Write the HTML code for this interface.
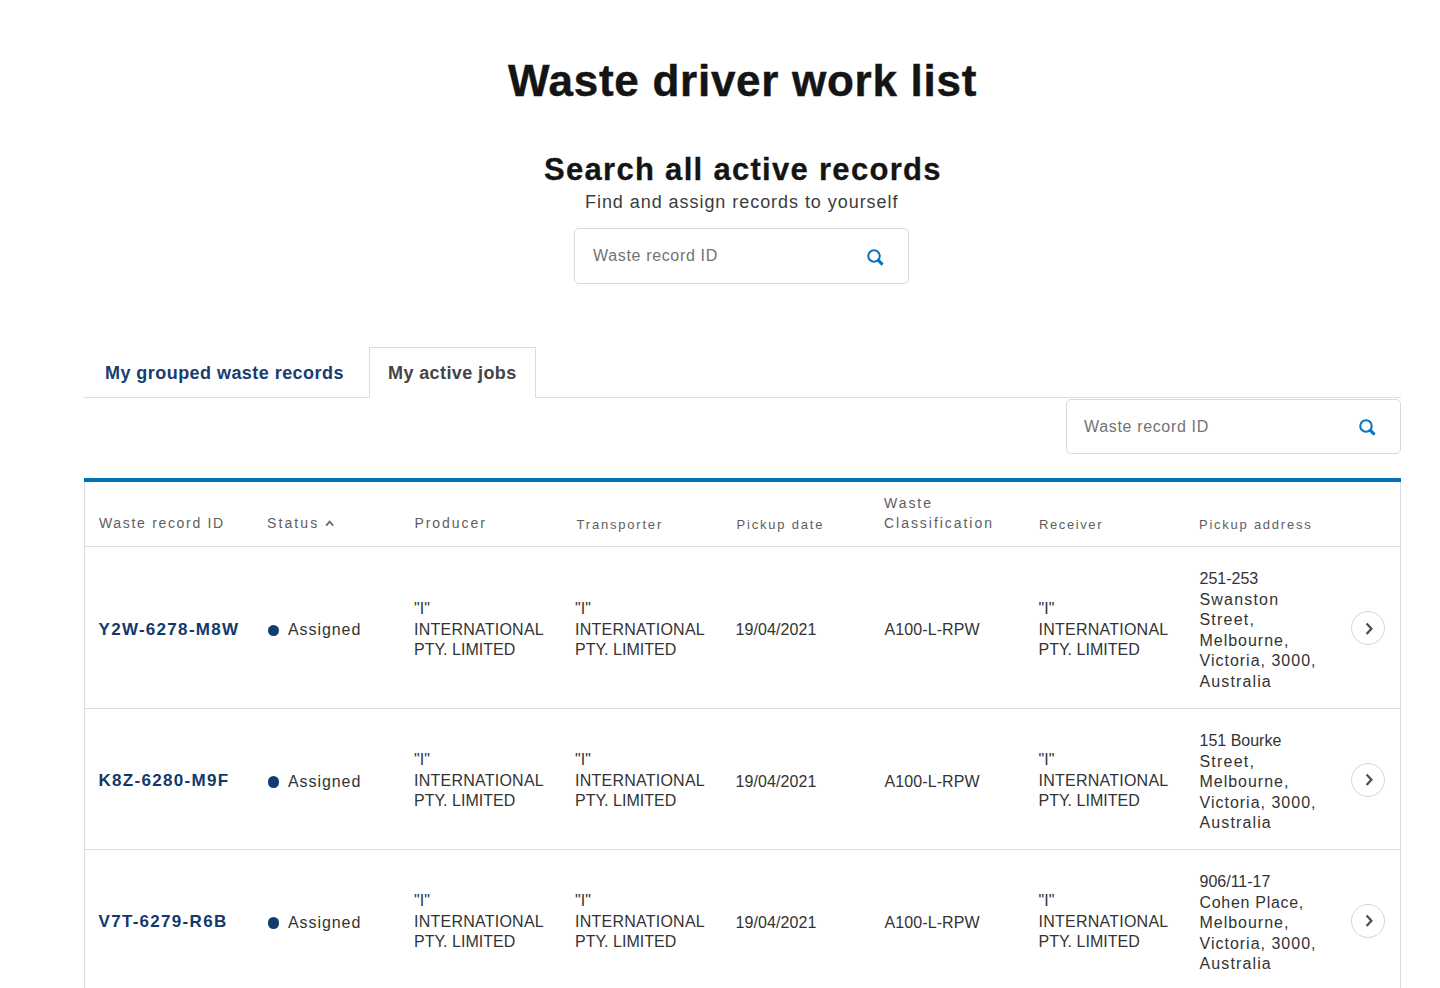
<!DOCTYPE html>
<html><head><meta charset="utf-8"><title>Waste driver work list</title>
<style>
html,body{margin:0;padding:0;background:#fff;}
body{width:1440px;height:988px;overflow:hidden;position:relative;font-family:"Liberation Sans", sans-serif;}
.box{position:absolute;box-sizing:border-box;}
</style></head><body>
<div style="position:absolute;left:508px;top:53.75px;font-size:44px;line-height:53px;font-weight:700;color:#141414;letter-spacing:0.72px;white-space:nowrap;-webkit-text-stroke:0.45px #141414;">Waste driver work list</div>
<div style="position:absolute;left:544px;top:151.36px;font-size:31px;line-height:37px;font-weight:700;color:#141414;letter-spacing:1.3px;white-space:nowrap;-webkit-text-stroke:0.3px #141414;">Search all active records</div>
<div style="position:absolute;left:585px;top:191.16px;font-size:18px;line-height:22px;font-weight:400;color:#3c3c3c;letter-spacing:0.95px;white-space:nowrap;">Find and assign records to yourself</div>
<div class="box" style="left:574px;top:228px;width:335px;height:56px;border:1px solid #d9d9d9;border-radius:5px"></div>
<div style="position:absolute;left:593px;top:245.76px;font-size:16px;line-height:19px;font-weight:400;color:#737373;letter-spacing:0.66px;white-space:nowrap;">Waste record ID</div>
<svg style="position:absolute;left:864.20px;top:246.20px" width="24" height="24" viewBox="0 0 24 24"><circle cx="10" cy="10" r="5.75" fill="none" stroke="#0a74bd" stroke-width="2.05"/><line x1="13.6" y1="13.6" x2="18.6" y2="18.6" stroke="#0a74bd" stroke-width="3.0" stroke-linecap="butt"/></svg>
<div class="box" style="left:84px;top:397px;width:1317px;height:1px;background:#dcdcdc"></div>
<div class="box" style="left:369px;top:347px;width:167px;height:51px;border:1px solid #dcdcdc;border-bottom:none;background:#fff"></div>
<div style="position:absolute;left:105px;top:361.76px;font-size:18px;line-height:22px;font-weight:700;color:#1a3c70;letter-spacing:0.45px;white-space:nowrap;">My grouped waste records</div>
<div style="position:absolute;left:388px;top:361.76px;font-size:18px;line-height:22px;font-weight:700;color:#444444;letter-spacing:0.4px;white-space:nowrap;">My active jobs</div>
<div class="box" style="left:1066px;top:399px;width:335px;height:55px;border:1px solid #d9d9d9;border-radius:5px"></div>
<div style="position:absolute;left:1084px;top:416.56px;font-size:16px;line-height:19px;font-weight:400;color:#737373;letter-spacing:0.66px;white-space:nowrap;">Waste record ID</div>
<svg style="position:absolute;left:1355.50px;top:416.20px" width="24" height="24" viewBox="0 0 24 24"><circle cx="10" cy="10" r="5.75" fill="none" stroke="#0a74bd" stroke-width="2.05"/><line x1="13.6" y1="13.6" x2="18.6" y2="18.6" stroke="#0a74bd" stroke-width="3.0" stroke-linecap="butt"/></svg>
<div class="box" style="left:84px;top:478px;width:1317px;height:4px;background:#0071b6"></div>
<div class="box" style="left:84px;top:482px;width:1px;height:520px;background:#d8dce3"></div>
<div class="box" style="left:1400px;top:482px;width:1px;height:520px;background:#d8dce3"></div>
<div class="box" style="left:84px;top:546px;width:1317px;height:1px;background:#d8dce3"></div>
<div class="box" style="left:84px;top:708px;width:1317px;height:1px;background:#d8dce3"></div>
<div class="box" style="left:84px;top:849px;width:1317px;height:1px;background:#d8dce3"></div>
<div style="position:absolute;left:99px;top:515.15px;font-size:14px;line-height:17px;font-weight:400;color:#5e5e5e;letter-spacing:1.68px;white-space:nowrap;">Waste record ID</div>
<div style="position:absolute;left:267px;top:515.15px;font-size:14px;line-height:17px;font-weight:400;color:#5e5e5e;letter-spacing:2.1px;white-space:nowrap;">Status</div>
<svg style="position:absolute;left:323px;top:518px" width="14" height="12" viewBox="0 0 14 12"><polyline points="3.2,7.6 6.6,3.6 10.2,7.6" fill="none" stroke="#6a6a6a" stroke-width="1.8"/></svg>
<div style="position:absolute;left:414.5px;top:515.15px;font-size:14px;line-height:17px;font-weight:400;color:#5e5e5e;letter-spacing:1.93px;white-space:nowrap;">Producer</div>
<div style="position:absolute;left:576.5px;top:516.70px;font-size:13px;line-height:16px;font-weight:400;color:#5e5e5e;letter-spacing:1.8px;white-space:nowrap;">Transporter</div>
<div style="position:absolute;left:736.5px;top:516.70px;font-size:13px;line-height:16px;font-weight:400;color:#5e5e5e;letter-spacing:1.8px;white-space:nowrap;">Pickup date</div>
<div style="position:absolute;left:884px;top:494.40px;font-size:14px;line-height:19.5px;font-weight:400;color:#5e5e5e;letter-spacing:1.96px;white-space:nowrap;">Waste<br>Classification</div>
<div style="position:absolute;left:1039px;top:517.30px;font-size:13px;line-height:16px;font-weight:400;color:#5e5e5e;letter-spacing:1.6px;white-space:nowrap;">Receiver</div>
<div style="position:absolute;left:1199px;top:516.80px;font-size:13px;line-height:16px;font-weight:400;color:#5e5e5e;letter-spacing:1.75px;white-space:nowrap;">Pickup address</div>
<div style="position:absolute;left:98.5px;top:619.61px;font-size:17px;line-height:20px;font-weight:700;color:#12396b;letter-spacing:1.3px;white-space:nowrap;">Y2W-6278-M8W</div>
<div class="box" style="left:267.5px;top:624.5px;width:11.5px;height:11.5px;border-radius:50%;background:#0f3d72"></div>
<div style="position:absolute;left:288px;top:620.46px;font-size:16px;line-height:19px;font-weight:400;color:#333;letter-spacing:0.93px;white-space:nowrap;">Assigned</div>
<div style="position:absolute;left:414px;top:599.96px;font-size:16px;line-height:20px;font-weight:400;color:#333;letter-spacing:0.24px;white-space:nowrap;"><span style="position:relative;top:-1px;letter-spacing:0">"I"</span><br>INTERNATIONAL<br><span style="letter-spacing:0.02px">PTY. LIMITED</span></div>
<div style="position:absolute;left:575px;top:599.96px;font-size:16px;line-height:20px;font-weight:400;color:#333;letter-spacing:0.24px;white-space:nowrap;"><span style="position:relative;top:-1px;letter-spacing:0">"I"</span><br>INTERNATIONAL<br><span style="letter-spacing:0.02px">PTY. LIMITED</span></div>
<div style="position:absolute;left:1038.5px;top:599.96px;font-size:16px;line-height:20px;font-weight:400;color:#333;letter-spacing:0.24px;white-space:nowrap;"><span style="position:relative;top:-1px;letter-spacing:0">"I"</span><br>INTERNATIONAL<br><span style="letter-spacing:0.02px">PTY. LIMITED</span></div>
<div style="position:absolute;left:735.5px;top:620.46px;font-size:16px;line-height:19px;font-weight:400;color:#333;letter-spacing:0.1px;white-space:nowrap;">19/04/2021</div>
<div style="position:absolute;left:884.5px;top:620.46px;font-size:16px;line-height:19px;font-weight:400;color:#333;letter-spacing:0.1px;white-space:nowrap;">A100-L-RPW</div>
<div style="position:absolute;left:1199.5px;top:569.46px;font-size:16px;line-height:20.5px;font-weight:400;color:#333;letter-spacing:0px;white-space:nowrap;"><span style="letter-spacing:0px">251-253</span><br><span style="letter-spacing:1.18px">Swanston</span><br><span style="letter-spacing:1.2px">Street,</span><br><span style="letter-spacing:0.98px">Melbourne,</span><br><span style="letter-spacing:1.0px">Victoria, 3000,</span><br><span style="letter-spacing:1.12px">Australia</span></div>
<div class="box" style="left:1351px;top:611.0px;width:34px;height:34px;border:1px solid #d3d7de;border-radius:50%"></div>
<svg style="position:absolute;left:1360px;top:619.5px" width="16" height="16" viewBox="0 0 16 16"><polyline points="6.6,3.5 11.4,8.8 6.6,14" fill="none" stroke="#505050" stroke-width="2.3"/></svg>
<div style="position:absolute;left:98.5px;top:771.11px;font-size:17px;line-height:20px;font-weight:700;color:#12396b;letter-spacing:1.3px;white-space:nowrap;">K8Z-6280-M9F</div>
<div class="box" style="left:267.5px;top:776.0px;width:11.5px;height:11.5px;border-radius:50%;background:#0f3d72"></div>
<div style="position:absolute;left:288px;top:771.96px;font-size:16px;line-height:19px;font-weight:400;color:#333;letter-spacing:0.93px;white-space:nowrap;">Assigned</div>
<div style="position:absolute;left:414px;top:751.46px;font-size:16px;line-height:20px;font-weight:400;color:#333;letter-spacing:0.24px;white-space:nowrap;"><span style="position:relative;top:-1px;letter-spacing:0">"I"</span><br>INTERNATIONAL<br><span style="letter-spacing:0.02px">PTY. LIMITED</span></div>
<div style="position:absolute;left:575px;top:751.46px;font-size:16px;line-height:20px;font-weight:400;color:#333;letter-spacing:0.24px;white-space:nowrap;"><span style="position:relative;top:-1px;letter-spacing:0">"I"</span><br>INTERNATIONAL<br><span style="letter-spacing:0.02px">PTY. LIMITED</span></div>
<div style="position:absolute;left:1038.5px;top:751.46px;font-size:16px;line-height:20px;font-weight:400;color:#333;letter-spacing:0.24px;white-space:nowrap;"><span style="position:relative;top:-1px;letter-spacing:0">"I"</span><br>INTERNATIONAL<br><span style="letter-spacing:0.02px">PTY. LIMITED</span></div>
<div style="position:absolute;left:735.5px;top:771.96px;font-size:16px;line-height:19px;font-weight:400;color:#333;letter-spacing:0.1px;white-space:nowrap;">19/04/2021</div>
<div style="position:absolute;left:884.5px;top:771.96px;font-size:16px;line-height:19px;font-weight:400;color:#333;letter-spacing:0.1px;white-space:nowrap;">A100-L-RPW</div>
<div style="position:absolute;left:1199.5px;top:731.21px;font-size:16px;line-height:20.5px;font-weight:400;color:#333;letter-spacing:0px;white-space:nowrap;"><span style="letter-spacing:0px">151 Bourke</span><br><span style="letter-spacing:1.2px">Street,</span><br><span style="letter-spacing:0.98px">Melbourne,</span><br><span style="letter-spacing:1.0px">Victoria, 3000,</span><br><span style="letter-spacing:1.12px">Australia</span></div>
<div class="box" style="left:1351px;top:762.5px;width:34px;height:34px;border:1px solid #d3d7de;border-radius:50%"></div>
<svg style="position:absolute;left:1360px;top:771.0px" width="16" height="16" viewBox="0 0 16 16"><polyline points="6.6,3.5 11.4,8.8 6.6,14" fill="none" stroke="#505050" stroke-width="2.3"/></svg>
<div style="position:absolute;left:98.5px;top:912.11px;font-size:17px;line-height:20px;font-weight:700;color:#12396b;letter-spacing:1.3px;white-space:nowrap;">V7T-6279-R6B</div>
<div class="box" style="left:267.5px;top:917.0px;width:11.5px;height:11.5px;border-radius:50%;background:#0f3d72"></div>
<div style="position:absolute;left:288px;top:912.96px;font-size:16px;line-height:19px;font-weight:400;color:#333;letter-spacing:0.93px;white-space:nowrap;">Assigned</div>
<div style="position:absolute;left:414px;top:892.46px;font-size:16px;line-height:20px;font-weight:400;color:#333;letter-spacing:0.24px;white-space:nowrap;"><span style="position:relative;top:-1px;letter-spacing:0">"I"</span><br>INTERNATIONAL<br><span style="letter-spacing:0.02px">PTY. LIMITED</span></div>
<div style="position:absolute;left:575px;top:892.46px;font-size:16px;line-height:20px;font-weight:400;color:#333;letter-spacing:0.24px;white-space:nowrap;"><span style="position:relative;top:-1px;letter-spacing:0">"I"</span><br>INTERNATIONAL<br><span style="letter-spacing:0.02px">PTY. LIMITED</span></div>
<div style="position:absolute;left:1038.5px;top:892.46px;font-size:16px;line-height:20px;font-weight:400;color:#333;letter-spacing:0.24px;white-space:nowrap;"><span style="position:relative;top:-1px;letter-spacing:0">"I"</span><br>INTERNATIONAL<br><span style="letter-spacing:0.02px">PTY. LIMITED</span></div>
<div style="position:absolute;left:735.5px;top:912.96px;font-size:16px;line-height:19px;font-weight:400;color:#333;letter-spacing:0.1px;white-space:nowrap;">19/04/2021</div>
<div style="position:absolute;left:884.5px;top:912.96px;font-size:16px;line-height:19px;font-weight:400;color:#333;letter-spacing:0.1px;white-space:nowrap;">A100-L-RPW</div>
<div style="position:absolute;left:1199.5px;top:872.21px;font-size:16px;line-height:20.5px;font-weight:400;color:#333;letter-spacing:0px;white-space:nowrap;"><span style="letter-spacing:0px">906/11-17</span><br><span style="letter-spacing:0.7px">Cohen Place,</span><br><span style="letter-spacing:0.98px">Melbourne,</span><br><span style="letter-spacing:1.0px">Victoria, 3000,</span><br><span style="letter-spacing:1.12px">Australia</span></div>
<div class="box" style="left:1351px;top:903.5px;width:34px;height:34px;border:1px solid #d3d7de;border-radius:50%"></div>
<svg style="position:absolute;left:1360px;top:912.0px" width="16" height="16" viewBox="0 0 16 16"><polyline points="6.6,3.5 11.4,8.8 6.6,14" fill="none" stroke="#505050" stroke-width="2.3"/></svg>
</body></html>
